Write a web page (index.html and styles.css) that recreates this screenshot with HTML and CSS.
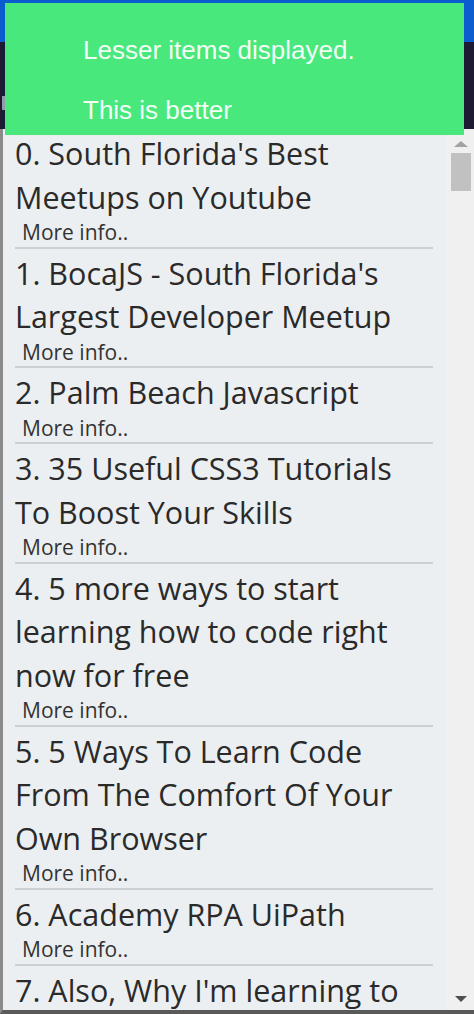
FILE: index.html
```html
<!DOCTYPE html>
<html>
<head>
<meta charset="utf-8">
<link rel="stylesheet" href="styles.css">
</head>
<body>
<div class="app">
  <div class="header"></div>
  <div class="bar"><span class="bar-stub"></span></div>
  <div class="panel">
    <ul class="list">
      <li class="item"><div class="title">0. South Florida's Best Meetups on Youtube</div><div class="more">More info..</div></li>
      <li class="item"><div class="title">1. BocaJS - South Florida's Largest Developer Meetup</div><div class="more">More info..</div></li>
      <li class="item"><div class="title">2. Palm Beach Javascript</div><div class="more">More info..</div></li>
      <li class="item"><div class="title">3. 35 Useful CSS3 Tutorials To Boost Your Skills</div><div class="more">More info..</div></li>
      <li class="item"><div class="title">4. 5 more ways to start learning how to code right now for free</div><div class="more">More info..</div></li>
      <li class="item"><div class="title">5. 5 Ways To Learn Code From The Comfort Of Your Own Browser</div><div class="more">More info..</div></li>
      <li class="item"><div class="title">6. Academy RPA UiPath</div><div class="more">More info..</div></li>
      <li class="item"><div class="title">7. Also, Why I'm learning to code</div><div class="more">More info..</div></li>
    </ul>
    <div class="scrollbar">
      <div class="arrow-up"></div>
      <div class="thumb"></div>
      <div class="track"></div>
      <div class="arrow-down"></div>
    </div>
  </div>
</div>
<div class="toast">
  <p class="toast-line">Lesser items displayed.</p>
  <p class="toast-line second">This is better</p>
</div>
</body>
</html>
```
FILE: styles.css
```css
* { box-sizing: border-box; }
html, body { margin: 0; padding: 0; }
body {
  width: 474px;
  height: 1014px;
  overflow: hidden;
  background: #1d1a33;
  font-family: "Open Sans", "Noto Sans", sans-serif;
}
.app {
  display: flex;
  flex-direction: column;
  height: 1014px;
}
.header {
  height: 42px;
  background: #0b5ccf;
  flex: none;
}
.bar {
  height: 87px;
  background: #1d1a33;
  flex: none;
  padding: 54px 0 0 2px;
}
.bar-stub {
  display: block;
  width: 3px;
  height: 14px;
  background: #9a98a8;
}
.panel {
  flex: 1;
  display: flex;
  min-height: 0;
  background: #eceff1;
  border-left: 3px solid #8a8a8a;
  border-bottom: 4px solid #5a5a5a;
  overflow: hidden;
}
.list {
  list-style: none;
  margin: 0;
  padding: 0 13px 0 12px;
  flex: 1;
  min-width: 0;
}
.item {
  padding-top: 3px;
  border-bottom: 2px solid #cdd0d3;
}
.title {
  font-size: 30.5px;
  line-height: 43.5px;
  color: #2a2a2a;
  white-space: normal;
}
.more {
  font-size: 21px;
  line-height: 27.5px;
  color: #333;
  padding-left: 7px;
}
.scrollbar {
  width: 28px;
  flex: none;
  background: #f0f0f0;
  display: flex;
  flex-direction: column;
  align-items: center;
  padding: 12px 0 8px 2px;
}
.arrow-up {
  width: 0; height: 0;
  border-left: 7px solid transparent;
  border-right: 7px solid transparent;
  border-bottom: 6px solid #a3a3a3;
}
.thumb {
  margin-top: 6px;
  width: 20px;
  height: 38px;
  background: #c1c1c1;
}
.track { flex: 1; }
.arrow-down {
  width: 0; height: 0;
  border-left: 6px solid transparent;
  border-right: 6px solid transparent;
  border-top: 6px solid #4f4f4f;
}
.toast {
  position: absolute;
  left: 5px;
  top: 3px;
  width: 459px;
  height: 132px;
  background: #48e87c;
  padding: 32px 0 0 78px;
  font-family: "Liberation Sans", Arial, sans-serif;
  color: #f2fff5;
  font-size: 26px;
}
.toast-line {
  margin: 0;
  line-height: 30px;
}
.toast-line.second { margin-top: 30px; }
```
